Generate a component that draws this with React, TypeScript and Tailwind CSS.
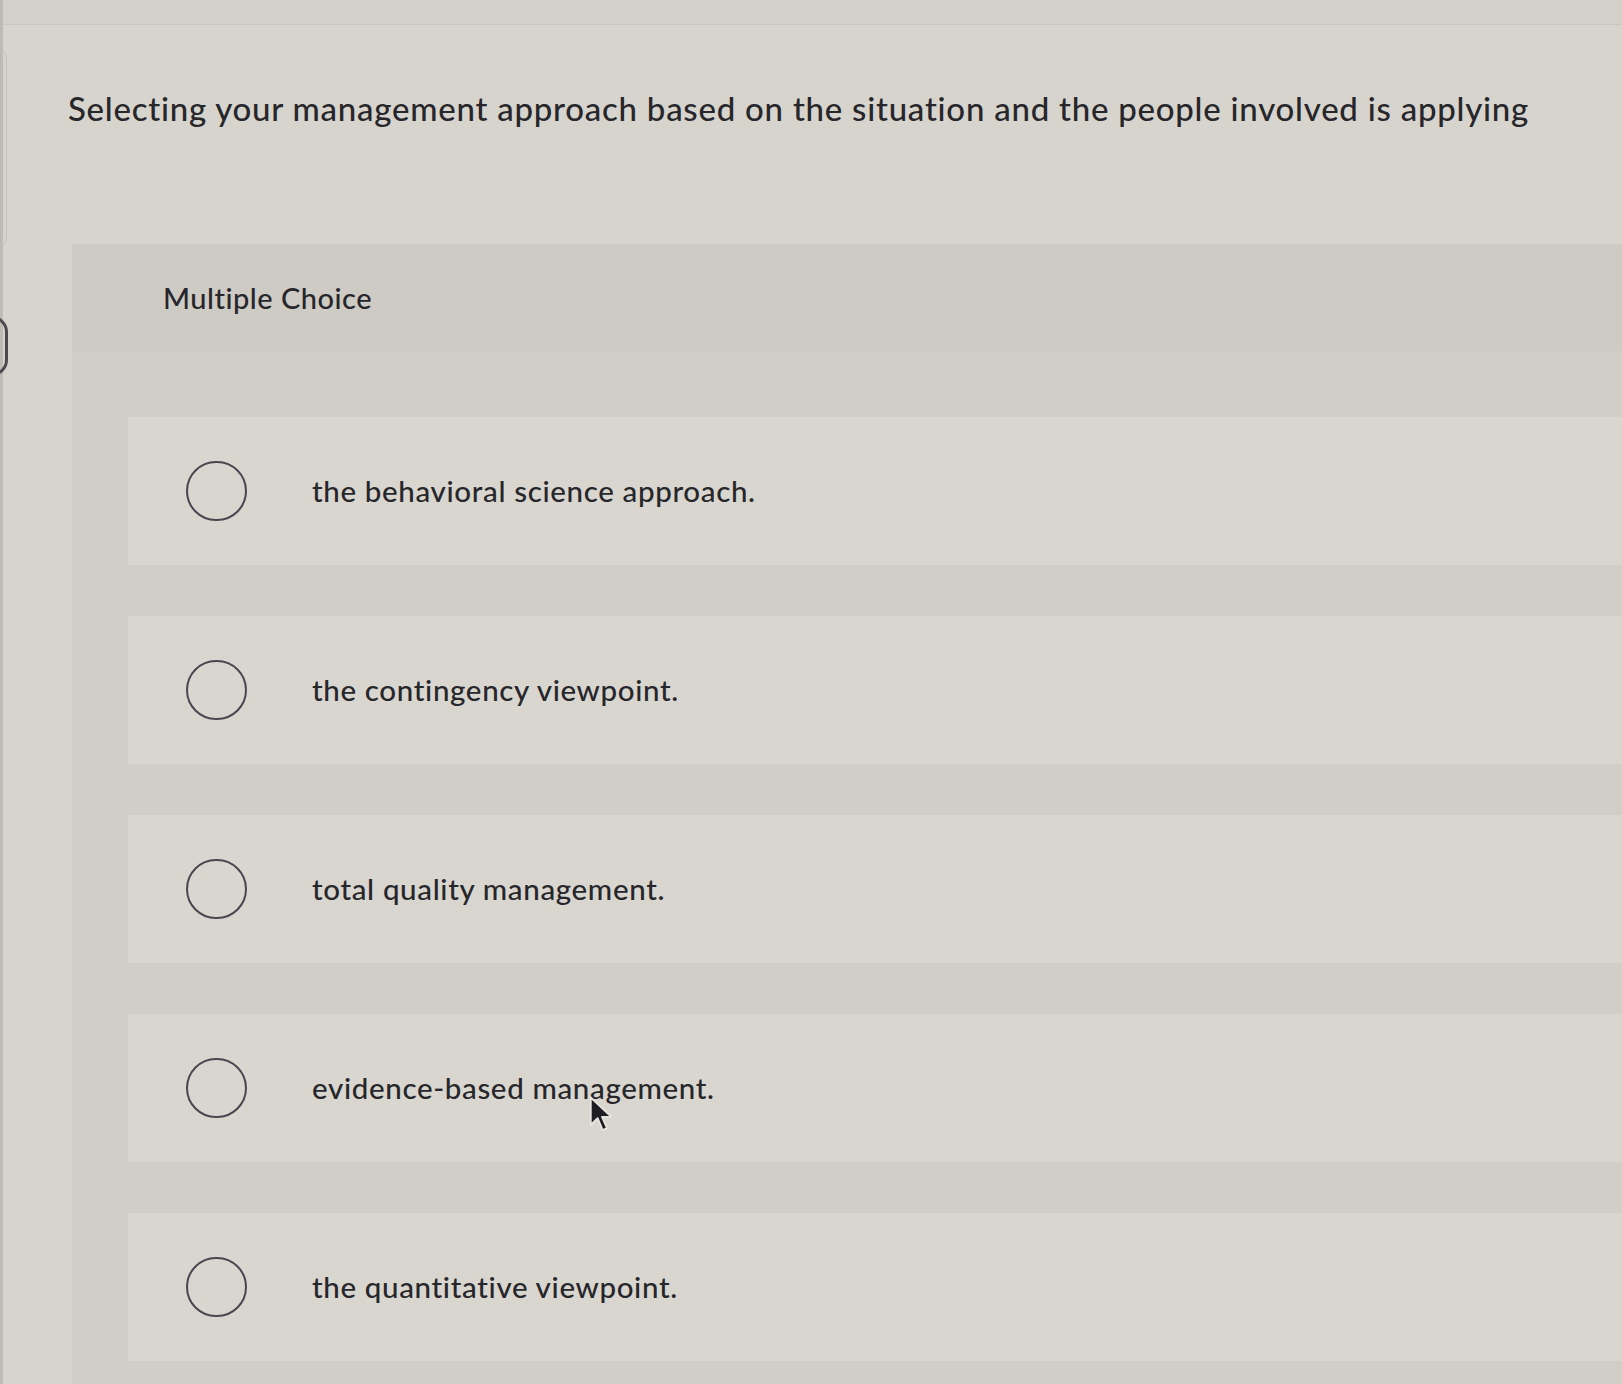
import React from "react";

const options = [
  "the behavioral science approach.",
  "the contingency viewpoint.",
  "total quality management.",
  "evidence-based management.",
  "the quantitative viewpoint.",
];

function Cursor() {
  return (
    <svg width="28" height="40" viewBox="0 0 22 32" className="absolute left-[588px] top-[1095px]">
      <path
        d="M2 2 L2 24 L7.5 18.5 L11.5 28 L15 26.5 L11 17.5 L18.5 17.5 Z"
        fill="#1e1e22"
        stroke="#e6e4de"
        strokeWidth="1.5"
        strokeLinejoin="round"
      />
    </svg>
  );
}

export default function App() {
  return (
    <div
      className="relative w-[1622px] h-[1384px] overflow-hidden bg-[#d6d4cd] text-[#27262b]"
      style={{ fontFamily: "Lato, 'Open Sans', sans-serif" }}
    >
      {/* left screen edge decorations */}
      <div className="absolute left-0 top-0 h-full w-[3px] bg-[#bdbbb4]" />
      <div className="absolute left-[-10px] top-[50px] h-[196px] w-[17px] rounded-[8px] border border-[#c3c1ba]" />
      <div className="absolute left-[-24px] top-[316px] h-[60px] w-[32px] rounded-full border-[3px] border-[#4c4a51]" />

      <div className="h-[25px] border-b border-[#c9c7c0] bg-[#d3d1ca]" />

      <div className="flex h-[138px] items-center pl-[68px] pt-[58px] pb-[30px]">
        <h1 className="whitespace-nowrap text-[33px] font-medium leading-none tracking-[0.75px]">
          Selecting your management approach based on the situation and the people involved is applying
        </h1>
      </div>

      <div className="ml-[72px] mt-[81px] bg-[#d0cec7]">
        <div className="flex h-[107px] items-center bg-[#cdcbc4] pl-[91px]">
          <span className="text-[29px] font-medium leading-none tracking-[0.5px]">Multiple Choice</span>
        </div>
        <div className="flex flex-col gap-[51px] pl-[56px] pt-[66px] pb-[60px]">
          {options.map((o) => (
            <div key={o} className="flex h-[148px] items-center bg-[#d8d6cf]">
              <div className="ml-[58px] h-[60px] w-[61px] shrink-0 rounded-full border-[2.5px] border-[#48464f]" />
              <span className="ml-[65px] whitespace-nowrap text-[29.5px] font-medium leading-none tracking-[0.65px]">
                {o}
              </span>
            </div>
          ))}
        </div>
      </div>

      <Cursor />
    </div>
  );
}
